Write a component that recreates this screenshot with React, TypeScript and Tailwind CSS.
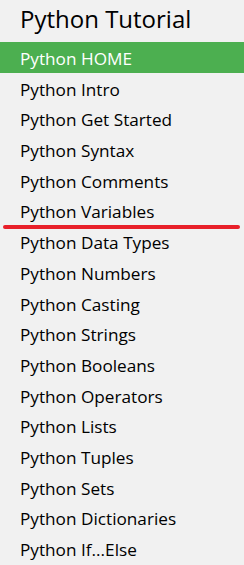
const topics = [
  "Python HOME",
  "Python Intro",
  "Python Get Started",
  "Python Syntax",
  "Python Comments",
  "Python Variables",
  "Python Data Types",
  "Python Numbers",
  "Python Casting",
  "Python Strings",
  "Python Booleans",
  "Python Operators",
  "Python Lists",
  "Python Tuples",
  "Python Sets",
  "Python Dictionaries",
  "Python If...Else",
];

export default function App() {
  return (
    <div
      className="relative w-[244px] h-[565px] overflow-hidden bg-[#f1f1f1] text-black"
      style={{ fontFamily: '"Open Sans", "Noto Sans", sans-serif' }}
    >
      <h2 className="h-[42px] pl-[20px] pt-[1px] text-[24px] leading-[36px] font-normal">
        Python Tutorial
      </h2>
      <ul className="list-none p-0 m-0">
        {topics.map((t, i) => (
          <li
            key={t}
            className={
              i === 0
                ? "h-[30.7px] pl-[20px] pt-[3px] text-[17.2px] leading-[27.7px] bg-[#4caf50] text-white"
                : "h-[30.7px] pl-[20px] pt-[3px] text-[17.2px] leading-[27.7px]"
            }
          >
            {t}
          </li>
        ))}
      </ul>
      <div className="absolute left-[3px] top-[225px] w-[237px] h-[4px] rounded-full bg-[#e8202a]" />
    </div>
  );
}
